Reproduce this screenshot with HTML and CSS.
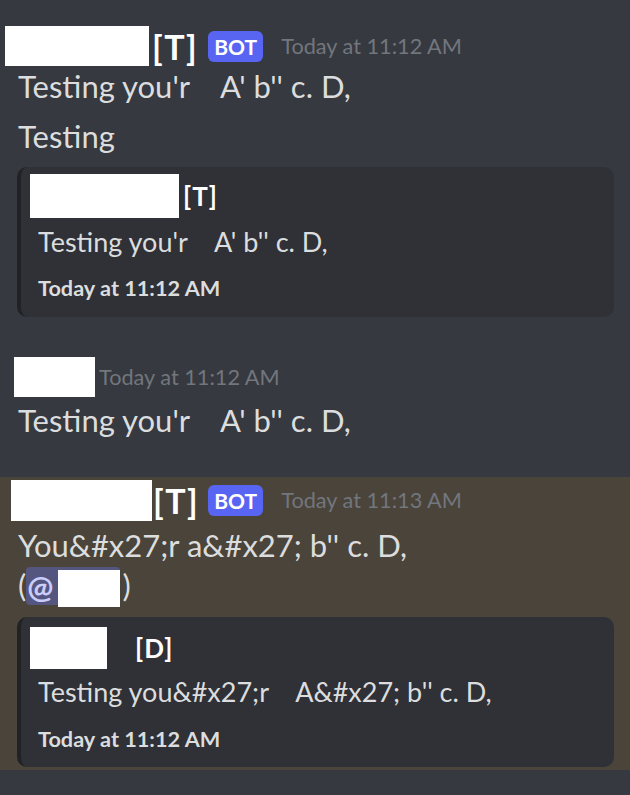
FILE: index.html
```html
<!DOCTYPE html>
<html>
<head>
<meta charset="utf-8">
<link rel="stylesheet" href="styles.css">
</head>
<body>
<div class="chat">
  <div class="msg m1">
    <div class="head">
      <span class="redact r1"></span>
      <span class="tag">[T]</span>
      <span class="bot">BOT</span>
      <span class="time">Today at 11:12 AM</span>
    </div>
    <div class="line">Testing you'r    A' b'' c. D,</div>
    <div class="line l2">Testing</div>
    <div class="embed e1">
      <div class="eauthor"><span class="redact r2"></span><span class="etag">[T]</span></div>
      <div class="edesc">Testing you'r    A' b'' c. D,</div>
      <div class="efoot">Today at 11:12 AM</div>
    </div>
  </div>

  <div class="msg m2">
    <div class="head">
      <span class="redact r3"></span>
      <span class="time t2">Today at 11:12 AM</span>
    </div>
    <div class="line l3">Testing you'r    A' b'' c. D,</div>
  </div>

  <div class="msg m3 hl">
    <div class="head h3">
      <span class="redact r4"></span>
      <span class="tag t4">[T]</span>
      <span class="bot">BOT</span>
      <span class="time">Today at 11:13 AM</span>
    </div>
    <div class="line">You&amp;#x27;r a&amp;#x27; b'' c. D,</div>
    <div class="line">(<span class="mention">@<span class="redact r5"></span></span>)</div>
    <div class="embed e2">
      <div class="eauthor"><span class="redact r6"></span><span class="etag d">[D]</span></div>
      <div class="edesc">Testing you&amp;#x27;r    A&amp;#x27; b'' c. D,</div>
      <div class="efoot">Today at 11:12 AM</div>
    </div>
  </div>
</div>
</body>
</html>
```

FILE: styles.css
```css
html, body {
  margin: 0;
  padding: 0;
  background: #36393f;
  width: 630px;
  height: 795px;
  overflow: hidden;
}
.chat {
  font-family: Lato, "Noto Sans", sans-serif;
  color: #dcddde;
  padding-top: 26px;
}
.msg {
  padding-left: 18px;
}
.head {
  display: flex;
  align-items: center;
  height: 40px;
}
.h3 { margin-bottom: 5px; }
.redact {
  display: inline-block;
  background: #ffffff;
}
.r1 { width: 144px; height: 40px; margin-left: -13px; }
.r2 { width: 149px; height: 44px; }
.r3 { width: 81px; height: 40px; margin-left: -4px; }
.r4 { width: 141px; height: 41px; margin-left: -7px; }
.r5 { width: 62px; height: 37px; vertical-align: -9px; margin-left: 5px; }
.r6 { width: 77px; height: 42px; }
.tag {
  font-weight: 700;
  color: #ffffff;
  font-size: 34px;
  letter-spacing: 1.5px;
  margin-left: 3px;
}
.t4 { margin-left: 1px; }
.bot {
  background: #5865f2;
  color: #fff;
  font-weight: 700;
  font-size: 21px;
  border-radius: 6px;
  width: 55px;
  height: 31px;
  display: flex;
  align-items: center;
  justify-content: center;
  margin-left: 10px;
}
.h3 .bot { margin-left: 9px; }
.time {
  color: #72767d;
  font-size: 21.7px;
  margin-left: 18px;
}
.t2 { margin-left: 4px; }
.line {
  font-size: 31px;
  line-height: 40px;
  white-space: pre;
}
.l2 { margin-top: 10px; }
.l3 { margin-top: 3px; }
.mention {
  display: inline-block;
  background: #55567f;
  color: #c9cdfb;
  font-weight: 700;
  border-radius: 4px;
  height: 38px;
  line-height: 38px;
  padding-left: 1px;
  margin-right: 2px;
  vertical-align: top;
  margin-top: 2px;
}
.embed {
  margin-left: -1px;
  width: 597px;
  box-sizing: border-box;
  background: #2f3136;
  border-left: 4px solid #202225;
  border-radius: 10px;
  padding: 7px 12px 13px 9px;
}
.e1 { margin-top: 11px; }
.eauthor {
  display: flex;
  align-items: center;
}
.etag {
  font-weight: 700;
  color: #ffffff;
  font-size: 26px;
  letter-spacing: 1px;
  margin-left: 4px;
}
.etag.d { margin-left: 28px; }
.edesc {
  font-size: 27px;
  line-height: 36px;
  white-space: pre;
  margin-top: 6px;
  padding-left: 8px;
}
.efoot {
  font-size: 21.7px;
  font-weight: 700;
  line-height: 32px;
  margin-top: 12px;
  padding-left: 8px;
}
.m2 { margin-top: 40px; }
.m3 {
  margin-top: 37px;
  padding-top: 3px;
  padding-bottom: 3px;
}
.hl { background: #4a443b; }
.e2 {
  margin-top: 12px;
  padding-top: 10px;
  padding-bottom: 12px;
}
.e2 .edesc { margin-top: 5px; }
.e2 .efoot { margin-top: 13px; }
```
